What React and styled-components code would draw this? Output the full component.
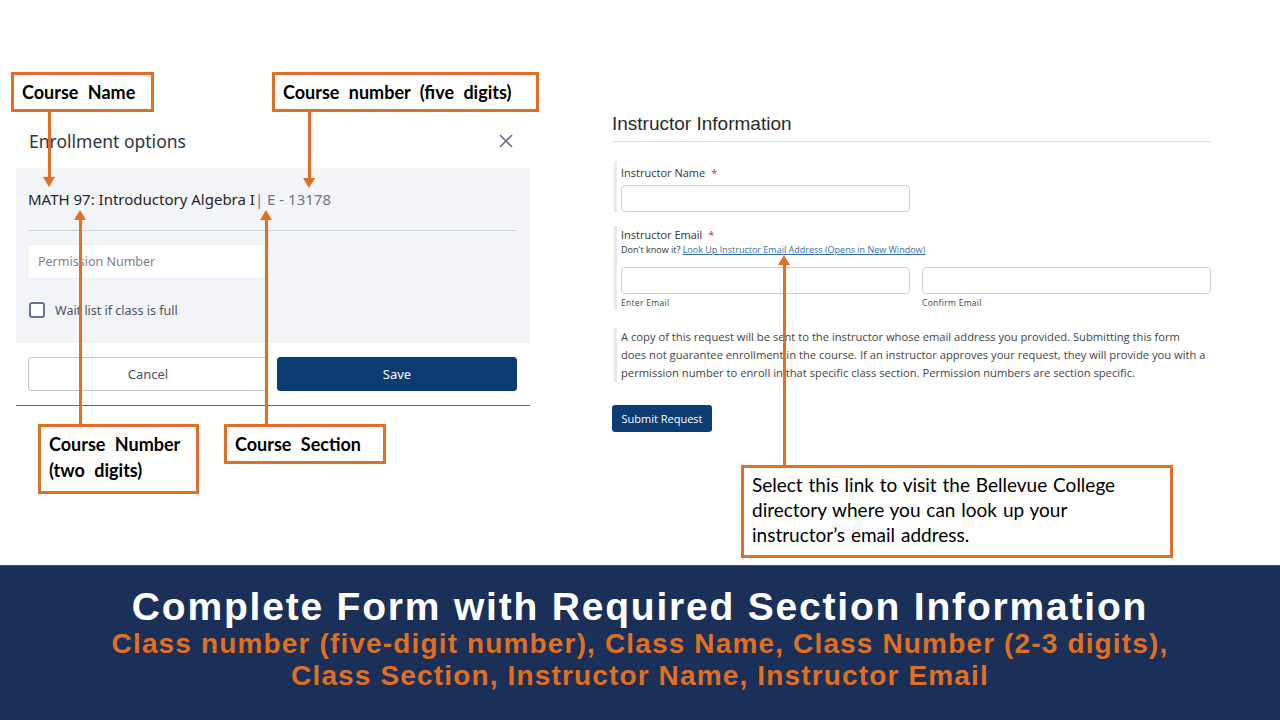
import React from 'react'
import styled, { createGlobalStyle } from 'styled-components'

const ORANGE = '#df6f22'
const NAVY = '#0c3c74'

const GlobalStyle = createGlobalStyle`
  body {
    margin: 0;
    background: #fff;
    font-family: 'Noto Sans', sans-serif;
  }
  * { box-sizing: border-box; }
`

const Page = styled.div`
  width: 1280px;
  height: 720px;
  display: flex;
  flex-direction: column;
  background: #fff;
  overflow: hidden;
`

const Stage = styled.main`
  position: relative;
  flex: 0 0 565px;
  display: flex;
`

/* ---------- left: enrollment modal ---------- */

const Modal = styled.section`
  width: 514px;
  margin: 118px 0 0 16px;
  align-self: flex-start;
  font-family: 'Noto Sans', sans-serif;
`

const ModalHeader = styled.header`
  height: 50px;
  display: flex;
  justify-content: space-between;
  align-items: flex-start;
  padding: 12px 13px 0 13px;
`

const ModalTitle = styled.h2`
  margin: 0;
  font-size: 17.5px;
  line-height: 22px;
  font-weight: 400;
  color: #2f3440;
`

const CloseX = styled.span`
  width: 22px;
  height: 22px;
  display: flex;
  align-items: center;
  justify-content: center;
`

const ModalBody = styled.div`
  background: #f3f4f8;
  padding: 20px 13px 23px 12px;
`

const CourseLine = styled.div`
  font-size: 15px;
  line-height: 22px;
  color: #23262e;
`

const Muted = styled.span`
  color: #6d7383;
`

const Divider = styled.hr`
  margin: 20px 0 0;
  border: 0;
  border-top: 1px solid #cfd3dc;
`

const PermissionInput = styled.div`
  margin-top: 14px;
  width: 237px;
  height: 33px;
  background: #fff;
  border-radius: 3px;
  display: flex;
  align-items: center;
  padding-left: 10px;
  font-size: 12.5px;
  color: #7b8190;
  box-shadow: 0 0 0 1px #eceef3;
`

const CheckRow = styled.label`
  margin-top: 22px;
  height: 20px;
  display: flex;
  align-items: center;
  gap: 10px;
  font-size: 12.5px;
  color: #4c5262;
`

const Box = styled.span`
  width: 16px;
  height: 16px;
  margin-left: 1px;
  border: 2px solid #6a7392;
  border-radius: 3px;
  background: #fff;
`

const ButtonRow = styled.div`
  display: flex;
  gap: 9px;
  padding: 14px 13px 14px 12px;
  border-bottom: 1px solid #6b6b6b;
`

const ModalButton = styled.button`
  flex: 1;
  height: 34px;
  border-radius: 3px;
  font-family: 'Noto Sans', sans-serif;
  font-size: 13px;
  border: 1px solid ${(p) => (p.$primary ? NAVY : '#c4c7cf')};
  background: ${(p) => (p.$primary ? NAVY : '#fff')};
  color: ${(p) => (p.$primary ? '#fff' : '#4a4f5c')};
`

/* ---------- right: instructor form ---------- */

const Form = styled.section`
  width: 599px;
  margin: 113px 0 0 82px;
  align-self: flex-start;
  font-family: 'Open Sans', 'Noto Sans', sans-serif;
`

const FormHeading = styled.h2`
  margin: 0;
  font-family: 'Liberation Sans', Arial, sans-serif;
  font-size: 19px;
  line-height: 22px;
  font-weight: 400;
  color: #2a2a2a;
  padding-bottom: 6px;
  border-bottom: 1px solid #e2e2e2;
`

const Group = styled.div`
  margin-top: ${(p) => p.$gap}px;
  margin-left: 2px;
  padding: ${(p) => p.$pad}px 0 0 4px;
  border-left: 3px solid #e9e9e9;
`

const FieldLabel = styled.div`
  font-size: 11px;
  line-height: 14px;
  color: #333;
`

const Star = styled.span`
  color: #c0392b;
  margin-left: 6px;
`

const Helper = styled.div`
  margin-top: 2px;
  font-size: 9px;
  line-height: 12px;
  color: #333;
`

const Link = styled.a`
  color: #2f6ea8;
  text-decoration: underline;
`

const Input = styled.div`
  width: 289px;
  height: 27px;
  border: 1px solid #cfcfcf;
  border-radius: 4px;
  background: #fff;
`

const InputRow = styled.div`
  display: flex;
  gap: 12px;
  margin-top: ${(p) => p.$gap}px;
`

const InputCol = styled.div`
  display: flex;
  flex-direction: column;
  gap: 3px;
`

const SubLabel = styled.div`
  font-size: 8.5px;
  line-height: 12px;
  letter-spacing: 0.3px;
  color: #444;
`

const Notice = styled.p`
  margin: 19px 0 0 2px;
  padding-left: 4px;
  border-left: 3px solid #e9e9e9;
  font-family: 'Open Sans', sans-serif;
  font-size: 11.2px;
  line-height: 18px;
  color: #444;
  white-space: nowrap;
`

const SubmitButton = styled.button`
  margin-top: 23px;
  width: 100px;
  height: 27px;
  border: 0;
  border-radius: 3px;
  background: ${NAVY};
  color: #fff;
  font-family: 'Open Sans', sans-serif;
  font-size: 11px;
`

/* ---------- annotations laid over the screenshot ---------- */

const Callout = styled.div`
  position: absolute;
  left: ${(p) => p.$left}px;
  top: ${(p) => p.$top}px;
  width: ${(p) => p.$w}px;
  height: ${(p) => p.$h}px;
  border: 3px solid ${ORANGE};
  background: #fff;
  padding: 4px 8px;
  font-family: Lato, 'Open Sans', sans-serif;
  font-weight: ${(p) => (p.$plain ? 400 : 700)};
  font-size: ${(p) => (p.$plain ? 19 : 18)}px;
  line-height: ${(p) => (p.$plain ? 25 : 26)}px;
  word-spacing: ${(p) => (p.$plain ? 1 : 5)}px;
  color: #000;
`

const Arrow = styled.div`
  position: absolute;
  left: ${(p) => p.$x - 1.5}px;
  top: ${(p) => p.$top}px;
  width: 3px;
  height: ${(p) => p.$len}px;
  background: ${ORANGE};
  z-index: 2;

  &::after {
    content: '';
    position: absolute;
    left: -4.5px;
    border-left: 6px solid transparent;
    border-right: 6px solid transparent;
    ${(p) =>
      p.$dir === 'down'
        ? `bottom: -10px; border-top: 10px solid ${ORANGE};`
        : `top: -10px; border-bottom: 10px solid ${ORANGE};`}
  }
`

/* ---------- footer banner ---------- */

const Banner = styled.footer`
  flex: 1;
  background: #1b3058;
  border-top: 1px solid #3b5178;
  text-align: center;
  padding-top: 21px;
`

const BannerTitle = styled.h1`
  margin: 0;
  font-family: 'Liberation Sans', Arial, sans-serif;
  font-weight: 700;
  font-size: 39px;
  line-height: 40px;
  letter-spacing: 1.8px;
  color: #fff;
`

const BannerSub = styled.p`
  margin: 1px 0 0;
  font-family: 'Liberation Sans', Arial, sans-serif;
  font-weight: 700;
  font-size: 28px;
  line-height: 32px;
  letter-spacing: 1.15px;
  color: ${ORANGE};
`

export default function App() {
  return (
    <Page>
      <GlobalStyle />
      <Stage>
        <Modal>
          <ModalHeader>
            <ModalTitle>Enrollment options</ModalTitle>
            <CloseX>
              <svg width="14" height="14" viewBox="0 0 14 14">
                <path d="M1 1 L13 13 M13 1 L1 13" stroke="#6a7385" strokeWidth="1.6" fill="none" />
              </svg>
            </CloseX>
          </ModalHeader>
          <ModalBody>
            <CourseLine>
              MATH 97: Introductory Algebra I<Muted>| E - 13178</Muted>
            </CourseLine>
            <Divider />
            <PermissionInput>Permission Number</PermissionInput>
            <CheckRow>
              <Box />
              Wait list if class is full
            </CheckRow>
          </ModalBody>
          <ButtonRow>
            <ModalButton>Cancel</ModalButton>
            <ModalButton $primary>Save</ModalButton>
          </ButtonRow>
        </Modal>

        <Form>
          <FormHeading>Instructor Information</FormHeading>
          <Group $gap={19} $pad={5}>
            <FieldLabel>
              Instructor Name<Star>*</Star>
            </FieldLabel>
            <InputRow $gap={5}>
              <Input />
            </InputRow>
          </Group>
          <Group $gap={14} $pad={2}>
            <FieldLabel>
              Instructor Email<Star>*</Star>
            </FieldLabel>
            <Helper>
              Don't know it? <Link>Look Up Instructor Email Address (Opens in New Window)</Link>
            </Helper>
            <InputRow $gap={11}>
              <InputCol>
                <Input />
                <SubLabel>Enter Email</SubLabel>
              </InputCol>
              <InputCol>
                <Input />
                <SubLabel>Confirm Email</SubLabel>
              </InputCol>
            </InputRow>
          </Group>
          <Notice>
            A copy of this request will be sent to the instructor whose email address you provided. Submitting this form
            <br />
            does not guarantee enrollment in the course. If an instructor approves your request, they will provide you with a
            <br />
            permission number to enroll in that specific class section. Permission numbers are section specific.
          </Notice>
          <SubmitButton>Submit Request</SubmitButton>
        </Form>

        <Callout $left={11} $top={72} $w={143} $h={40}>Course Name</Callout>
        <Callout $left={272} $top={72} $w={267} $h={40}>Course number (five digits)</Callout>
        <Callout $left={38} $top={424} $w={161} $h={70}>
          Course Number
          <br />
          (two digits)
        </Callout>
        <Callout $left={224} $top={424} $w={162} $h={40}>Course Section</Callout>
        <Callout $left={741} $top={465} $w={432} $h={93} $plain>
          Select this link to visit the Bellevue College
          <br />
          directory where you can look up your
          <br />
          instructor’s email address.
        </Callout>

        <Arrow $x={49} $top={111} $len={66} $dir="down" />
        <Arrow $x={309} $top={111} $len={67} $dir="down" />
        <Arrow $x={80} $top={220} $len={205} $dir="up" />
        <Arrow $x={266} $top={220} $len={205} $dir="up" />
        <Arrow $x={784} $top={265} $len={201} $dir="up" />
      </Stage>

      <Banner>
        <BannerTitle>Complete Form with Required Section Information</BannerTitle>
        <BannerSub>
          Class number (five-digit number), Class Name, Class Number (2-3 digits),
          <br />
          Class Section, Instructor Name, Instructor Email
        </BannerSub>
      </Banner>
    </Page>
  )
}
